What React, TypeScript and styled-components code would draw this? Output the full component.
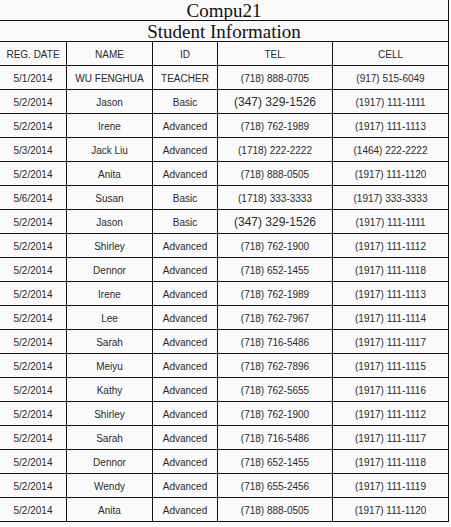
import React from "react";
import styled, { createGlobalStyle } from "styled-components";

const Global = createGlobalStyle`
  html, body { margin: 0; padding: 0; background: #fbfbfb; }
  body { font-family: "Liberation Sans", Arial, sans-serif; }
`;

const Sheet = styled.div`
  width: 449px;
  display: flex;
  flex-direction: column;
  background: #fafafa;
`;

const TitleBar = styled.div<{ $h: number }>`
  height: ${(p) => p.$h - 1}px;
  border-bottom: 1px solid #111;
  border-right: 1px solid #111;
  display: flex;
  align-items: center;
  justify-content: center;
  font-family: "Liberation Serif", "Times New Roman", serif;
  font-size: 19px;
  color: #111;
  line-height: 1;
  padding-top: 1px;
  box-sizing: border-box;
`;

const Grid = styled.div`
  display: grid;
  grid-template-columns: 67px 86px 65px 115px 116px;
`;

const Cell = styled.div<{ $h: number; $big?: boolean }>`
  height: ${(p) => p.$h}px;
  box-sizing: border-box;
  border-right: 1px solid #111;
  border-bottom: 1px solid #111;
  display: flex;
  align-items: center;
  justify-content: center;
  font-size: ${(p) => (p.$big ? 12 : 10)}px;
  color: #2a2a2a;
  white-space: nowrap;
  padding-top: 1px;
`;

const rows: string[][] = [
  ["5/1/2014", "WU FENGHUA", "TEACHER", "(718) 888-0705", "(917) 515-6049"],
  ["5/2/2014", "Jason", "Basic", "(347) 329-1526", "(1917) 111-1111"],
  ["5/2/2014", "Irene", "Advanced", "(718) 762-1989", "(1917) 111-1113"],
  ["5/3/2014", "Jack Liu", "Advanced", "(1718) 222-2222", "(1464) 222-2222"],
  ["5/2/2014", "Anita", "Advanced", "(718) 888-0505", "(1917) 111-1120"],
  ["5/6/2014", "Susan", "Basic", "(1718) 333-3333", "(1917) 333-3333"],
  ["5/2/2014", "Jason", "Basic", "(347) 329-1526", "(1917) 111-1111"],
  ["5/2/2014", "Shirley", "Advanced", "(718) 762-1900", "(1917) 111-1112"],
  ["5/2/2014", "Dennor", "Advanced", "(718) 652-1455", "(1917) 111-1118"],
  ["5/2/2014", "Irene", "Advanced", "(718) 762-1989", "(1917) 111-1113"],
  ["5/2/2014", "Lee", "Advanced", "(718) 762-7967", "(1917) 111-1114"],
  ["5/2/2014", "Sarah", "Advanced", "(718) 716-5486", "(1917) 111-1117"],
  ["5/2/2014", "Meiyu", "Advanced", "(718) 762-7896", "(1917) 111-1115"],
  ["5/2/2014", "Kathy", "Advanced", "(718) 762-5655", "(1917) 111-1116"],
  ["5/2/2014", "Shirley", "Advanced", "(718) 762-1900", "(1917) 111-1112"],
  ["5/2/2014", "Sarah", "Advanced", "(718) 716-5486", "(1917) 111-1117"],
  ["5/2/2014", "Dennor", "Advanced", "(718) 652-1455", "(1917) 111-1118"],
  ["5/2/2014", "Wendy", "Advanced", "(718) 655-2456", "(1917) 111-1119"],
  ["5/2/2014", "Anita", "Advanced", "(718) 888-0505", "(1917) 111-1120"],
];

const headers = ["REG. DATE", "NAME", "ID", "TEL.", "CELL"];

export default function App() {
  return (
    <>
      <Global />
      <Sheet>
        <TitleBar $h={22}>Compu21</TitleBar>
        <TitleBar $h={22}>Student Information</TitleBar>
        <Grid>
          {headers.map((h) => (
            <Cell key={h} $h={24}>
              {h}
            </Cell>
          ))}
          {rows.map((r, i) =>
            r.map((v, j) => (
              <Cell key={`${i}-${j}`} $h={24} $big={j === 3 && v.startsWith("(347)")}>
                {v}
              </Cell>
            ))
          )}
        </Grid>
      </Sheet>
    </>
  );
}
